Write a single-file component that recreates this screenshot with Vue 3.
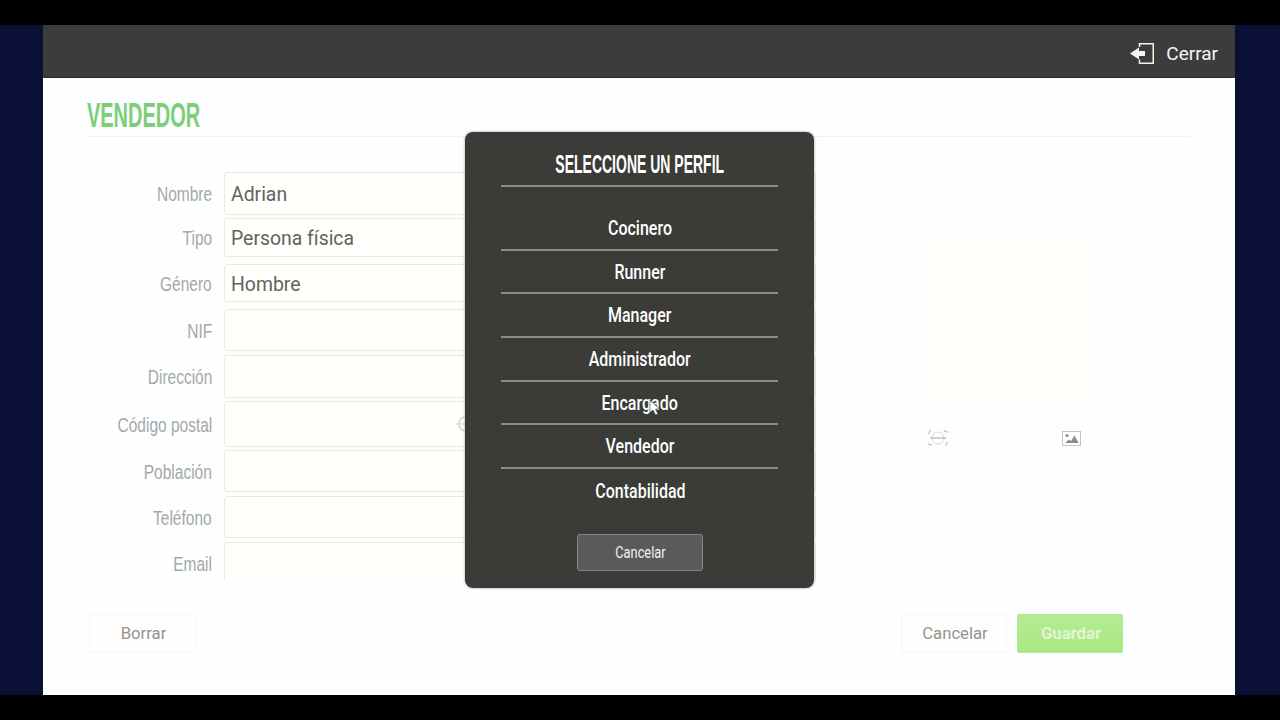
<script setup>
const fields = [
  { label: 'Nombre', value: 'Adrian', h: 43, gap: 3 },
  { label: 'Tipo', value: 'Persona física', h: 39, gap: 7 },
  { label: 'Género', value: 'Hombre', h: 38, gap: 7 },
  { label: 'NIF', value: '', h: 42, gap: 4 },
  { label: 'Dirección', value: '', h: 43, gap: 3 },
  { label: 'Código postal', value: '', h: 46, gap: 3, locate: true },
  { label: 'Población', value: '', h: 42, gap: 4 },
  { label: 'Teléfono', value: '', h: 42, gap: 4 },
  { label: 'Email', value: '', h: 42, gap: 0 }
]
const roles = ['Cocinero', 'Runner', 'Manager', 'Administrador', 'Encargado', 'Vendedor', 'Contabilidad']
</script>

<template>
  <div class="screen">
    <div class="band top"></div>
    <div class="middle">
      <div class="side left"></div>
      <main class="window">
        <header class="bar">
          <div class="close">
            <svg width="24" height="21" viewBox="0 0 24 21" class="exit">
              <path d="M9.500 4V.75H23.250V20.250H9.500V16.500" fill="none" stroke="#f4f4f4" stroke-width="1.500" />
              <path d="M0 10.500L9 4.500V8H15V13H9V16.500Z" fill="#f4f4f4" />
            </svg>
            <span>Cerrar</span>
          </div>
        </header>
        <section class="content">
          <h1 class="title"><span>VENDEDOR</span></h1>
          <div class="columns">
            <div class="form">
              <div v-for="f in fields" :key="f.label" class="field" :style="{ height: f.h + 'px', marginBottom: f.gap + 'px' }">
                <label class="lab"><span>{{ f.label }}</span></label>
                <div class="input">
                  {{ f.value }}
                  <svg v-if="f.locate" class="locate" width="20" height="20" viewBox="0 0 20 20">
                    <circle cx="10" cy="10" r="7" fill="none" stroke="#cfd2d0" stroke-width="1.500" />
                    <path d="M0 10H20M10 0V20" stroke="#cfd2d0" stroke-width="1.200" />
                  </svg>
                </div>
              </div>
            </div>
            <div class="photo">
              <div class="placeholder"></div>
              <div class="photo-icons">
                <svg width="20" height="16" viewBox="0 0 20 16">
                  <path d="M1 4V1H4M16 1H19V4M19 12V15H16M4 15H1V12" fill="none" stroke="#8d8d8d" stroke-width="1" stroke-dasharray="1.500 1.500" />
                  <path d="M4 8A6 6 0 0 1 16 8A6 6 0 0 1 4 8" fill="none" stroke="#cfcfcf" stroke-width="0.800" />
                  <path d="M2 8H18" stroke="#9a9a9a" stroke-width="0.900" />
                </svg>
                <svg width="19" height="15" viewBox="0 0 19 15">
                  <rect x="0.500" y="0.500" width="18" height="14" fill="#fff" stroke="#c4c4c4" />
                  <circle cx="5" cy="4.500" r="1.500" fill="#8a8a8a" />
                  <path d="M3 12L7 8.500L9 10L12.500 4.500L16.500 12Z" fill="#8a8a8a" />
                </svg>
              </div>
            </div>
          </div>
          <footer class="actions">
            <button class="btn">Borrar</button>
            <div class="right">
              <button class="btn">Cancelar</button>
              <button class="btn save">Guardar</button>
            </div>
          </footer>

          <div class="modal">
            <h2 class="modal-title"><span>SELECCIONE UN PERFIL</span></h2>
            <ul class="roles">
              <li v-for="r in roles" :key="r"><span>{{ r }}</span></li>
            </ul>
            <button class="modal-cancel"><span>Cancelar</span></button>
            <svg class="cursor" width="12" height="18" viewBox="0 0 12 18">
              <path d="M1 1V13.500L4 11L6.500 16L9 15L6.500 10H10.500Z" fill="#fff" stroke="#333" stroke-width="0.600" />
            </svg>
          </div>
        </section>
      </main>
      <div class="side"></div>
    </div>
    <div class="band bottom"></div>
  </div>
</template>

<style>
html, body { margin: 0; background: #000; }
</style>

<style scoped>
.screen {
  width: 1280px;
  height: 720px;
  display: flex;
  flex-direction: column;
  background: #000;
  overflow: hidden;
  font-family: Roboto, "Liberation Sans", sans-serif;
}
.band.top { height: 25px; flex: none; }
.band.bottom { height: 25px; flex: none; }
.middle { flex: 1; display: flex; min-height: 0; }
.side { flex: 1; background: #0a0f35; }
.side.left { flex: none; width: 43px; }
.window {
  width: 1192px;
  flex: none;
  display: flex;
  flex-direction: column;
  background: #fcfeff;
}
.bar {
  height: 53px;
  flex: none;
  box-sizing: border-box;
  border-bottom: 1px solid #2c2c2c;
  background: #3c3c3c;
  display: flex;
  align-items: center;
  justify-content: flex-end;
  padding: 5px 17px 0 0;
}
.close { display: flex; align-items: center; gap: 12px; color: #f5f5f5; font-size: 19px; }
.exit { display: block; }
.content { flex: 1; position: relative; min-height: 0; padding: 0 45px 0 44px; }
.title {
  margin: 0;
  height: 59px;
  box-sizing: border-box;
  border-bottom: 1px solid #f1f4f5;
  font: 700 35px/74px "Liberation Sans", sans-serif;
  color: #7dce78;
  overflow: hidden;
}
.title span { display: inline-block; transform: scaleX(0.57); transform-origin: left; }
.columns { display: flex; padding-top: 35px; height: 408px; box-sizing: content-box; }
.form { width: 729px; flex: none; height: 408px; overflow: hidden; }
.field { display: flex; align-items: center; }
.lab {
  width: 125px;
  flex: none;
  text-align: right;
  padding-top: 2px;
  font: 400 20px "Liberation Sans", sans-serif;
  color: #a6a8a8;
}
.lab span { display: inline-block; transform: scaleX(0.775); transform-origin: right; white-space: nowrap; }
.input {
  position: relative;
  margin-left: 12px;
  flex: 1;
  height: 100%;
  box-sizing: border-box;
  border: 1px solid #e0f0dc;
  border-radius: 3px;
  background: #fffffc;
  padding: 2px 0 0 6px;
  display: flex;
  align-items: center;
  font-size: 19.400px;
  color: #626262;
}
.locate { position: absolute; left: 231px; top: 12px; }
.photo { width: 374px; flex: none; display: flex; flex-direction: column; padding-left: 109px; box-sizing: border-box; }
.placeholder { margin-top: 68px; width: 165px; height: 165px; background: #fffffb; }
.photo-icons { margin-top: 25px; width: 153px; margin-left: 3px; display: flex; justify-content: space-between; align-items: center; }
.actions {
  display: flex;
  justify-content: space-between;
  margin-top: 34px;
  padding: 0 67px 0 2px;
}
.right { display: flex; gap: 10px; }
.right .btn { width: 106px; }
.btn {
  width: 107px;
  height: 39px;
  box-sizing: border-box;
  padding: 0 0 0 2px;
  border: 1px solid #f4f5f5;
  border-radius: 2px;
  background: #fffefd;
  color: #939393;
  font: 400 16.700px Roboto, sans-serif;
}
.btn.save {
  border-color: #aeea8c;
  background: linear-gradient(#b4ec92, #a9e886);
  color: #e2f6d3;
  font-weight: 700;
}
.modal {
  position: absolute;
  left: 422px;
  top: 54px;
  width: 349px;
  height: 456px;
  box-sizing: border-box;
  border-radius: 8px;
  background: #3b3b38;
  box-shadow: 0 0 2px 1px rgba(150, 150, 150, 0.45);
  display: flex;
  flex-direction: column;
  align-items: center;
  color: #fff;
}
.modal-title {
  width: 277px;
  height: 55px;
  margin: 0;
  box-sizing: border-box;
  border-bottom: 2px solid #8d8d88;
  text-align: center;
  font: 700 25px/65px "Liberation Sans", sans-serif;
  white-space: nowrap;
}
.modal-title span { display: inline-block; transform: scaleX(0.56); margin: 0 -60px; }
.roles { list-style: none; margin: 20px 0 0; padding: 0; width: 277px; }
.roles li {
  height: 43.700px;
  box-sizing: border-box;
  border-bottom: 2px solid #8d8d88;
  padding-left: 1px;
  display: flex;
  align-items: center;
  justify-content: center;
  font: 500 20px Roboto, sans-serif;
}
.roles li span { display: inline-block; transform: scaleX(0.8); white-space: nowrap; }
.roles li:last-child { border-bottom: none; }
.modal-cancel {
  margin-top: 21px;
  width: 126px;
  height: 37px;
  box-sizing: border-box;
  padding: 0 0 0 2px;
  border: 1px solid #85857f;
  border-radius: 3px;
  background: #5a5a5a;
  color: #f2f2f2;
  font: 400 16px Roboto, sans-serif;
}
.modal-cancel span { display: inline-block; transform: scaleX(0.8); }
.cursor { position: absolute; left: 184px; top: 267px; }
</style>
